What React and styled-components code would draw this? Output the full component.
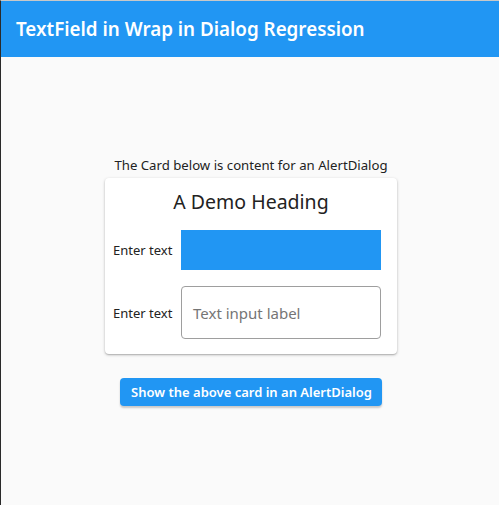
import styled, { createGlobalStyle } from "styled-components";

const GlobalStyle = createGlobalStyle`
  html, body {
    margin: 0;
    padding: 0;
    background: #fafafa;
  }
  body {
    font-family: "Noto Sans", "Open Sans", sans-serif;
  }
`;

const Page = styled.div`
  width: 499px;
  height: 505px;
  box-sizing: border-box;
  border-top: 1px solid #c8c8c8;
  border-left: 1px solid #2a2a2a;
  background: #fafafa;
  display: flex;
  flex-direction: column;
  overflow: hidden;
`;

const AppBar = styled.header`
  height: 56px;
  flex-shrink: 0;
  background: #2196f3;
  display: flex;
  align-items: center;
  padding-left: 15px;
`;

const Title = styled.h1`
  margin: 0;
  color: #fff;
  font-size: 18.8px;
  font-weight: 600;
`;

const Body = styled.main`
  display: flex;
  flex-direction: column;
  align-items: center;
  padding-top: 99px;
  padding-left: 2px;
`;

const Caption = styled.p`
  margin: 0 0 4px;
  font-size: 13.2px;
  color: #222;
  line-height: 18px;
`;

const Card = styled.div`
  width: 292px;
  box-sizing: border-box;
  background: #fff;
  border-radius: 4px;
  box-shadow: 0 1px 3px rgba(0, 0, 0, 0.25), 0 1px 1px rgba(0, 0, 0, 0.12);
  padding: 9px 16px 15px 8px;
  display: flex;
  flex-direction: column;
`;

const Heading = styled.h2`
  margin: 0 -8px 13px 0;
  text-align: center;
  font-size: 19.5px;
  font-weight: 400;
  color: #222;
  line-height: 30px;
`;

const Row = styled.div`
  display: flex;
  align-items: center;
  gap: 8px;
  margin-top: ${(p) => p.$gap || 0}px;
`;

const Label = styled.span`
  font-size: 13px;
  color: #222;
  width: 60px;
  white-space: nowrap;
`;

const BlueBox = styled.div`
  width: 200px;
  height: 40px;
  background: #2196f3;
`;

const Field = styled.div`
  width: 200px;
  height: 53px;
  box-sizing: border-box;
  border: 1px solid #9e9e9e;
  border-radius: 4px;
  display: flex;
  align-items: center;
  padding-left: 11px;
  font-size: 15px;
  color: #757575;
`;

const Button = styled.button`
  margin-top: 24px;
  height: 28px;
  padding: 0 10px 0 11px;
  border: none;
  border-radius: 4px;
  background: #2196f3;
  color: #fff;
  font-family: inherit;
  font-size: 13px;
  font-weight: 600;
  box-shadow: 0 2px 2px rgba(0, 0, 0, 0.2);
`;

export default function App() {
  return (
    <>
      <GlobalStyle />
      <Page>
        <AppBar>
          <Title>TextField in Wrap in Dialog Regression</Title>
        </AppBar>
        <Body>
          <Caption>The Card below is content for an AlertDialog</Caption>
          <Card>
            <Heading>A Demo Heading</Heading>
            <Row>
              <Label>Enter text</Label>
              <BlueBox />
            </Row>
            <Row $gap={16}>
              <Label>Enter text</Label>
              <Field>Text input label</Field>
            </Row>
          </Card>
          <Button>Show the above card in an AlertDialog</Button>
        </Body>
      </Page>
    </>
  );
}
